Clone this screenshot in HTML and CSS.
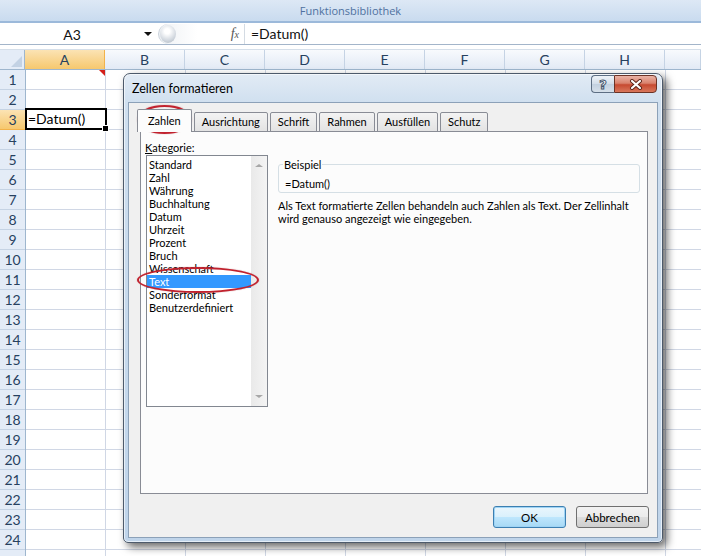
FILE: index.html
```html
<!DOCTYPE html>
<html lang="de">
<head>
    <meta charset="UTF-8">
    <title>Zellen formatieren</title>
    <link rel="stylesheet" href="styles.css">
</head>
<body>
    <div class="excel">
        <div class="ribbon-group">Funktionsbibliothek</div>

        <div class="formula-bar">
            <div class="name-box">
                <span class="cell-ref">A3</span>
                <span class="drop-arrow"></span>
            </div>
            <div class="fx-area">
                <span class="grip"></span>
                <span class="fx"><i>f</i><i class="fx-sub">x</i></span>
            </div>
            <div class="formula-input">=Datum()</div>
        </div>

        <div class="col-heads">
            <div class="corner"><span class="corner-tri"></span></div>
            <div class="col-head active">A</div>
            <div class="col-head">B</div>
            <div class="col-head">C</div>
            <div class="col-head">D</div>
            <div class="col-head">E</div>
            <div class="col-head">F</div>
            <div class="col-head">G</div>
            <div class="col-head">H</div>
            <div class="col-head"></div>
        </div>

        <div class="sheet-body">
            <div class="row-heads">
                <div class="row-head">1</div>
                <div class="row-head">2</div>
                <div class="row-head active">3</div>
                <div class="row-head">4</div>
                <div class="row-head">5</div>
                <div class="row-head">6</div>
                <div class="row-head">7</div>
                <div class="row-head">8</div>
                <div class="row-head">9</div>
                <div class="row-head">10</div>
                <div class="row-head">11</div>
                <div class="row-head">12</div>
                <div class="row-head">13</div>
                <div class="row-head">14</div>
                <div class="row-head">15</div>
                <div class="row-head">16</div>
                <div class="row-head">17</div>
                <div class="row-head">18</div>
                <div class="row-head">19</div>
                <div class="row-head">20</div>
                <div class="row-head">21</div>
                <div class="row-head">22</div>
                <div class="row-head">23</div>
                <div class="row-head">24</div>
                <div class="row-head"></div>
            </div>
            <div class="cells">
                <div class="cell cell-a1"><span class="comment-mark"></span></div>
                <div class="cell cell-a3">=Datum()<span class="fill-handle"></span></div>
            </div>
        </div>
    </div>

    <div class="dialog">
        <div class="titlebar">
            <span class="title">Zellen formatieren</span>
            <div class="caption-btns">
                <span class="cap-btn help">?</span>
                <span class="cap-btn close">
                    <svg width="14" height="11" viewBox="0 0 14 11">
                        <path d="M3 2 L11 9 M11 2 L3 9" stroke="#5a2418" stroke-width="4" stroke-linecap="round"/>
                        <path d="M3 2 L11 9 M11 2 L3 9" stroke="#fff" stroke-width="2.2" stroke-linecap="round"/>
                    </svg>
                </span>
            </div>
        </div>

        <div class="client">
            <div class="tabs">
                <span class="tab active">Zahlen</span>
                <span class="tab">Ausrichtung</span>
                <span class="tab">Schrift</span>
                <span class="tab">Rahmen</span>
                <span class="tab">Ausfüllen</span>
                <span class="tab">Schutz</span>
            </div>

            <div class="tab-page">
                <div class="category">
                    <div class="field-label"><u>K</u>ategorie:</div>
                    <div class="listbox">
                        <ul class="items">
                            <li>Standard</li>
                            <li>Zahl</li>
                            <li>Währung</li>
                            <li>Buchhaltung</li>
                            <li>Datum</li>
                            <li>Uhrzeit</li>
                            <li>Prozent</li>
                            <li>Bruch</li>
                            <li>Wissenschaft</li>
                            <li class="selected">Text</li>
                            <li>Sonderformat</li>
                            <li>Benutzerdefiniert</li>
                        </ul>
                        <div class="scrollbar">
                            <span class="arrow up"></span>
                            <span class="arrow down"></span>
                        </div>
                    </div>
                </div>

                <div class="details">
                    <fieldset class="sample">
                        <legend>Beispiel</legend>
                        <div class="sample-value">=Datum()</div>
                    </fieldset>
                    <p class="hint">Als Text formatierte Zellen behandeln auch Zahlen als Text. Der Zellinhalt<br>wird genauso angezeigt wie eingegeben.</p>
                </div>
            </div>

            <div class="footer">
                <button class="btn default">OK</button>
                <button class="btn">Abbrechen</button>
            </div>
        </div>
    </div>

    <div class="mark mark-tab"></div>
    <div class="mark mark-text"></div>
</body>
</html>
```

FILE: styles.css
```css
body {
    margin: 0;
    width: 701px;
    height: 556px;
    overflow: hidden;
    position: relative;
    background-color: #fff;
    font-family: Lato, "Liberation Sans", sans-serif;
}

/* ---- excel window ---- */
.ribbon-group {
    height: 21px;
    line-height: 21px;
    background: linear-gradient(#dde8f5, #c9dbef);
    border-bottom: 2px solid #9cb9da;
    text-align: center;
    font-family: "Open Sans", sans-serif;
    font-size: 11px;
    color: #4f71a0;
}
.formula-bar {
    display: flex;
    height: 20px;
    margin-top: 1px;
    border-bottom: 1px solid #a3b5ca;
    background-color: #fff;
    font-size: 14px;
    color: #111;
}
.name-box {
    width: 158px;
    display: flex;
    align-items: center;
}
.cell-ref {
    flex: 1;
    text-align: center;
}
.drop-arrow {
    width: 0;
    height: 0;
    border-left: 4px solid transparent;
    border-right: 4px solid transparent;
    border-top: 4px solid #111;
    margin-right: 6px;
}
.fx-area {
    width: 85px;
    display: flex;
    align-items: center;
    justify-content: space-between;
    background: linear-gradient(to right, #eef1f4, #fff 45%);
    border-left: 1px solid #c9d1db;
    border-radius: 10px 0 0 10px;
}
.grip {
    width: 16px;
    height: 18px;
    border-radius: 50%;
    background: radial-gradient(circle at 45% 35%, #fff 0 18%, #d3d9e0 60%, #aab3be);
    margin-left: 1px;
}
.fx {
    font-family: "Liberation Serif", serif;
    font-size: 14px;
    color: #555;
    margin-right: 5px;
}
.fx-sub {
    font-size: 10px;
}
.formula-input {
    flex: 1;
    border-left: 1px solid #d4dbe3;
    padding-left: 6px;
    line-height: 20px;
}

.col-heads {
    display: grid;
    grid-template-columns: 25px repeat(8, 80px) 1fr;
    height: 19px;
    margin-top: 4px;
    border-top: 1px solid #d5dfea;
    border-bottom: 1px solid #9eb6ce;
}
.corner {
    background: #e4ecf7;
    border-right: 1px solid #9eb6ce;
    position: relative;
}
.corner-tri {
    position: absolute;
    right: 2px;
    bottom: 2px;
    border-left: 11px solid transparent;
    border-bottom: 11px solid #c3d2e4;
}
.col-head {
    background: linear-gradient(#f8fafd, #e2eaf5);
    border-right: 1px solid #c5d3e4;
    text-align: center;
    font-size: 14px;
    line-height: 19px;
    color: #27415f;
}
.col-head.active {
    background: linear-gradient(#fbe3b4, #f6c86e);
    border-right-color: #f2b24a;
}

.sheet-body {
    display: flex;
}
.row-heads {
    width: 25px;
    border-right: 1px solid #9eb6ce;
    flex-shrink: 0;
}
.row-head {
    height: 19px;
    line-height: 19px;
    border-bottom: 1px solid #c5d3e4;
    background: #e4ecf7;
    text-align: center;
    font-size: 14px;
    color: #27415f;
}
.row-head.active {
    background: linear-gradient(#fbe3b4, #f6c86e);
    border-bottom-color: #f2b24a;
}
.cells {
    flex: 1;
    display: grid;
    grid-template-columns: repeat(8, 80px) 1fr;
    grid-auto-rows: 20px;
    background-image:
        repeating-linear-gradient(to bottom, transparent 0 19px, #d0d7e5 19px 20px),
        repeating-linear-gradient(to right, transparent 0 79px, #d0d7e5 79px 80px);
    height: 500px;
}
.cell {
    position: relative;
    font-size: 14px;
}
.cell-a1 {
    grid-row: 1;
    grid-column: 1;
}
.comment-mark {
    position: absolute;
    right: 1px;
    top: 0;
    border-left: 6px solid transparent;
    border-top: 6px solid #d4201a;
}
.cell-a3 {
    grid-row: 3;
    grid-column: 1;
    margin: -2px -1px 0 -1px;
    border: 2px solid #000;
    padding-left: 1px;
    line-height: 18px;
    color: #000;
}
.fill-handle {
    position: absolute;
    right: -4px;
    bottom: -4px;
    width: 5px;
    height: 5px;
    background: #000;
    border: 1px solid #fff;
}

/* ---- dialog ---- */
.dialog {
    position: absolute;
    left: 123px;
    top: 73px;
    width: 530px;
    padding: 0 4px 4px 4px;
    border: 1px solid #4d5a6b;
    border-radius: 7px 7px 5px 5px;
    background: linear-gradient(to bottom, #e2ebf5 0, #cfdfef 30px, #bfd4ea 100%);
    box-shadow: 4px 4px 9px rgba(0, 0, 0, 0.6), inset 0 0 0 1px rgba(255, 255, 255, 0.6);
    font-family: Lato, "Liberation Sans", sans-serif;
    font-size: 11px;
    color: #000;
}
.titlebar {
    height: 28px;
    display: flex;
    justify-content: space-between;
    align-items: flex-start;
}
.title {
    font-size: 12.5px;
    margin: 7px 0 0 4px;
}
.caption-btns {
    display: flex;
    margin-top: 1px;
    margin-right: 1px;
}
.cap-btn {
    height: 16px;
    display: flex;
    align-items: center;
    justify-content: center;
    border: 1px solid #5d6e83;
}
.cap-btn.help {
    width: 22px;
    border-right: none;
    border-radius: 4px 0 0 4px;
    background: linear-gradient(#eef3f8, #d2dde9 50%, #c2d0df 51%, #d6e0ea);
    color: #fff;
    font-family: "DejaVu Sans", sans-serif;
    font-weight: bold;
    font-size: 13px;
    -webkit-text-stroke: 1px #46566b;
}
.cap-btn.close {
    width: 41px;
    border-color: #6b3326;
    border-radius: 0 4px 4px 0;
    background: linear-gradient(#eab3a6, #d9826d 45%, #c64a31 55%, #d8775c);
}
.client {
    height: 434px;
    border: 1px solid #8ca1b8;
    background-color: #f0f0f0;
}
.tabs {
    display: flex;
    align-items: flex-end;
    gap: 2px;
    padding: 6px 0 0 8px;
    margin-bottom: -1px;
    position: relative;
    z-index: 1;
}
.tab {
    height: 18px;
    line-height: 18px;
    padding: 0 7px;
    border: 1px solid #898c95;
    border-radius: 2px 2px 0 0;
    background: linear-gradient(#f3f3f3, #e3e3e3);
}
.tab.active {
    height: 22px;
    line-height: 22px;
    padding: 0 10px;
    margin-right: -2px;
    border-bottom: none;
    background: #fcfcfc;
}
.tab.active + .tab {
    margin-left: 2px;
}
.tab-page {
    height: 361px;
    margin: 0 9px 0 11px;
    border: 1px solid #898c95;
    background-color: #fcfcfc;
    display: flex;
}
.category {
    padding: 9px 0 0 4px;
}
.field-label {
    height: 14px;
    line-height: 14px;
}
.listbox {
    margin: 0 0 0 1px;
    width: 120px;
    height: 250px;
    border: 1px solid #828790;
    background-color: #fff;
    display: flex;
}
.items {
    flex: 1;
    list-style: none;
    margin: 0;
    padding: 2px 0 0 0;
}
.items li {
    height: 13px;
    line-height: 13px;
    padding-left: 2px;
}
.items li.selected {
    background-color: #3399ff;
    color: #fff;
}
.scrollbar {
    width: 16px;
    background: linear-gradient(to right, #e9e9e9, #f4f4f4);
    display: flex;
    flex-direction: column;
    justify-content: space-between;
    align-items: center;
    padding: 8px 0;
}
.arrow {
    border-left: 4px solid transparent;
    border-right: 4px solid transparent;
}
.arrow.up {
    border-bottom: 3px solid #a7a7a7;
}
.arrow.down {
    border-top: 3px solid #a7a7a7;
}
.details {
    margin: 26px 0 0 10px;
    width: 362px;
}
.sample {
    margin: 0;
    padding: 0 0 0 6px;
    border: 1px solid #d5dfe5;
    border-radius: 3px;
    height: 33px;
}
.sample legend {
    padding: 0 1px;
    margin-left: -2px;
}
.sample-value {
    padding-top: 6px;
}
.hint {
    margin: 6px 0 0 0;
    line-height: 13px;
}
.footer {
    display: flex;
    justify-content: flex-end;
    gap: 10px;
    padding: 12px 8px 0 0;
}
.btn {
    width: 73px;
    height: 22px;
    padding: 0;
    border: 1px solid #707070;
    border-radius: 3px;
    background: linear-gradient(#f2f2f2, #ebebeb 50%, #dddddd 51%, #cfcfcf);
    font-family: Lato, "Liberation Sans", sans-serif;
    font-size: 11.5px;
    color: #000;
}
.btn.default {
    border-color: #3c7fb1;
    background: linear-gradient(#eaf6fd, #d9f0fc 50%, #bee6fd 51%, #a7d9f5);
    box-shadow: inset 0 0 0 1px #9fd4f5;
}

/* ---- red annotations ---- */
.mark {
    position: absolute;
    border: 2px solid #c1222e;
    border-radius: 50%;
    box-shadow: 0 0 1px rgba(150, 20, 30, 0.6);
}
.mark-tab {
    left: 137px;
    top: 105px;
    width: 51px;
    height: 25px;
}
.mark-text {
    left: 137px;
    top: 267px;
    width: 118px;
    height: 22px;
}
```
